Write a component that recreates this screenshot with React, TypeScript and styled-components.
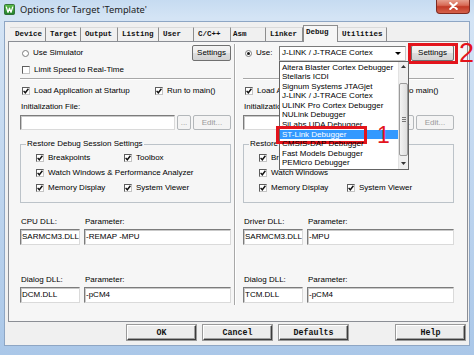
import React from "react";
import styled, { createGlobalStyle, css } from "styled-components";

const UI = `"Liberation Sans", Arial, sans-serif`;
const MONO = `"Liberation Mono", "Courier New", monospace`;

const GlobalStyle = createGlobalStyle`
  html, body { margin: 0; padding: 0; }
  body { width: 474px; height: 355px; overflow: hidden; background: #b4cde9; }
  *, *::before, *::after { box-sizing: border-box; }
`;

const Window = styled.div`
  width: 474px;
  height: 355px;
  display: flex;
  flex-direction: column;
  padding: 0 4px 9px 4px;
  background: linear-gradient(180deg, #c6dbf1 0px, #d4e4f5 18px, #c0d6ef 50%, #aac7e8 100%);
  font-family: ${UI};
  font-size: 8px;
  color: #000;
`;

const TitleBar = styled.div`
  flex: none;
  height: 21px;
  display: flex;
  align-items: flex-start;
`;

const AppIcon = styled.svg`
  flex: none;
  margin-top: 4px;
  width: 11px;
  height: 11px;
`;

const Title = styled.div`
  margin: 3px 0 0 5px;
  font-family: "Noto Sans", "Liberation Sans", sans-serif;
  font-size: 9.3px;
  line-height: 13px;
  color: #1b1b1b;
  white-space: nowrap;
`;

const CloseButton = styled.div`
  margin-left: auto;
  margin-top: -1px;
  width: 34px;
  height: 15px;
  border: 1px solid #7e2a20;
  border-top: none;
  border-radius: 0 0 4px 4px;
  background: linear-gradient(180deg, #e9a897 0%, #d86a55 45%, #c23a26 55%, #d5624c 100%);
  display: flex;
  align-items: center;
  justify-content: center;
`;

const Client = styled.div`
  flex: 1;
  display: flex;
  flex-direction: column;
  background: #f0f0f0;
  border: 1px solid #8ea6c4;
  padding: 0 1px 0 3px;
`;

const TabStrip = styled.div`
  flex: none;
  margin-top: 3px;
  height: 16px;
  display: flex;
  align-items: flex-end;
  padding-left: 2px;
`;

const Tab = styled.div<{ $w: number; $pad: number; $active?: boolean }>`
  flex: none;
  width: ${(p) => p.$w}px;
  padding-left: ${(p) => p.$pad}px;
  font-family: ${MONO};
  font-weight: bold;
  font-size: 7.5px;
  white-space: nowrap;
  color: #111;
  ${(p) =>
    p.$active
      ? css`
          height: 17px;
          margin-bottom: -1px;
          position: relative;
          z-index: 1;
          background: #f6f6f6;
          border: 1px solid #8d8d8d;
          border-bottom: none;
          line-height: 13px;
        `
      : css`
          height: 14px;
          border-top: 1px solid #dadada;
          border-right: 1px solid #8d8d8d;
          line-height: 12px;
        `}
`;

const Panel = styled.div`
  flex: none;
  height: 281px;
  border: 1px solid #8b8e95;
  background: #f6f6f6;
  display: grid;
  grid-template-columns: 225px 2px 1fr;
`;

const Half = styled.div<{ $pl: number; $pr: number }>`
  display: flex;
  flex-direction: column;
  padding: 3px ${(p) => p.$pr}px 0 ${(p) => p.$pl}px;
  min-width: 0;
`;

const VSep = styled.div`
  margin: 2px 0 16px;
  border-left: 1px solid #a8a8a8;
  border-right: 1px solid #ffffff;
`;

const TopRow = styled.div`
  height: 16px;
  display: flex;
  align-items: center;
`;

const RadioDot = styled.span<{ $on?: boolean }>`
  flex: none;
  width: 7px;
  height: 7px;
  margin-left: 2px;
  border-radius: 50%;
  border: 1px solid #7d7d7d;
  background: #fff;
  display: flex;
  align-items: center;
  justify-content: center;
  &::after {
    content: "";
    width: 3px;
    height: 3px;
    border-radius: 50%;
    background: ${(p) => (p.$on ? "#1a1a1a" : "transparent")};
  }
`;

const RadioText = styled.span<{ $w?: number }>`
  margin-left: 4px;
  line-height: 10px;
  white-space: nowrap;
  ${(p) => p.$w !== undefined && css`width: ${p.$w}px; flex: none;`}
`;

const PushButton = styled.div<{ $w: number; $disabled?: boolean }>`
  flex: none;
  width: ${(p) => p.$w}px;
  height: 100%;
  border-radius: 2px;
  border: 1px solid ${(p) => (p.$disabled ? "#b3b7ba" : "#707070")};
  background: ${(p) =>
    p.$disabled
      ? "#f4f4f4"
      : "linear-gradient(180deg, #f4f4f4 0%, #ececec 48%, #dddddd 52%, #d2d2d2 100%)"};
  color: ${(p) => (p.$disabled ? "#9a9a9a" : "#000")};
  display: flex;
  align-items: center;
  justify-content: center;
  line-height: 10px;
  white-space: nowrap;
`;

const SettingsWrap = styled.div<{ $w: number }>`
  position: relative;
  margin-left: auto;
  width: ${(p) => p.$w}px;
  height: 16px;
  display: flex;
`;

const RedBox = styled.div`
  position: absolute;
  border: 3px solid #e3141c;
  pointer-events: none;
`;

const SettingsMark = styled(RedBox)`
  top: -2px;
  left: -3px;
  right: -4px;
  bottom: -3px;
`;

const RedNumber = styled.div<{ $size: number }>`
  position: absolute;
  font-family: ${UI};
  font-size: ${(p) => p.$size}px;
  line-height: 20px;
  color: #e3141c;
`;

const NumberTwo = styled(RedNumber)`
  left: calc(100% + 5px);
  top: -2px;
`;

const Combo = styled.div`
  position: relative;
  flex: none;
  width: 127px;
  height: 15px;
  background: #fff;
  border: 1px solid;
  border-color: #7a7a7a #c9c9c9 #c9c9c9 #7a7a7a;
  display: flex;
  align-items: center;
  padding-left: 2px;
  line-height: 10px;
  white-space: nowrap;
`;

const ComboArrow = styled.span`
  margin-left: auto;
  margin-right: 4px;
  width: 0;
  height: 0;
  border-left: 3px solid transparent;
  border-right: 3px solid transparent;
  border-top: 3px solid #000;
`;

const DropList = styled.div`
  position: absolute;
  z-index: 5;
  left: -1px;
  top: calc(100% + 1px);
  width: 130px;
  height: 109px;
  background: #fff;
  border: 1px solid #646464;
  display: grid;
  grid-template-columns: 1fr 10px;
`;

const Items = styled.div`
  display: flex;
  flex-direction: column;
  padding-top: 1px;
`;

const Item = styled.div<{ $sel?: boolean }>`
  position: relative;
  height: 9.6px;
  line-height: 9.6px;
  padding-left: 2px;
  white-space: nowrap;
  color: ${(p) => (p.$sel ? "#fff" : "#000")};
  background: ${(p) => (p.$sel ? "#3399ff" : "transparent")};
`;

const ItemMark = styled(RedBox)`
  left: -4px;
  top: -4px;
  width: 91px;
  height: 18px;
`;

const NumberOne = styled(RedNumber)`
  left: 97px;
  top: -5px;
`;

const ScrollBar = styled.div`
  display: flex;
  flex-direction: column;
  background: #efefef;
  border-left: 1px solid #e2e2e2;
`;

const ScrollArrow = styled.div`
  flex: none;
  height: 10px;
  display: flex;
  align-items: center;
  justify-content: center;
`;

const ScrollTrack = styled.div`
  flex: 1;
  display: flex;
  flex-direction: column;
  align-items: center;
`;

const Thumb = styled.div`
  margin-top: 11px;
  width: 9px;
  height: 73px;
  border: 1px solid #9b9b9b;
  border-radius: 2px;
  background: linear-gradient(90deg, #f3f3f3, #dedede);
  display: flex;
  flex-direction: column;
  align-items: center;
  justify-content: center;
  gap: 1px;
`;

const Grip = styled.span`
  width: 4px;
  height: 1px;
  background: #777;
`;

const TextRow = styled.div<{ $mt: number }>`
  margin-top: ${(p) => p.$mt}px;
  height: 10px;
  line-height: 10px;
  padding-left: 1px;
  white-space: nowrap;
`;

const HLine = styled.div`
  margin-top: 3px;
  height: 2px;
  border-top: 1px solid #a8a8a8;
  border-bottom: 1px solid #ffffff;
`;

const CheckRow = styled.div<{ $mt: number; $col: number }>`
  margin-top: ${(p) => p.$mt}px;
  height: 10px;
  display: grid;
  grid-template-columns: ${(p) => p.$col}px 1fr;
`;

const CheckItem = styled.div<{ $span?: boolean }>`
  display: flex;
  align-items: center;
  gap: 4px;
  padding-left: 2px;
  height: 10px;
  line-height: 10px;
  white-space: nowrap;
  ${(p) => p.$span && css`grid-column: 1 / -1;`}
`;

const Box = styled.span`
  flex: none;
  width: 8px;
  height: 8px;
  background: #fff;
  border: 1px solid;
  border-color: #5e5e5e #c4c4c4 #c4c4c4 #5e5e5e;
  display: flex;
  align-items: center;
  justify-content: center;
`;

const FileRow = styled.div`
  margin-top: 3px;
  height: 15px;
  display: flex;
  gap: 2px;
`;

const Field = styled.div<{ $grow?: boolean }>`
  ${(p) => p.$grow && css`flex: 1;`}
  min-width: 0;
  height: 100%;
  background: #fff;
  border: 1px solid;
  border-color: #7c7c7c #dadada #dadada #7c7c7c;
  box-shadow: inset 1px 1px 0 #c9c9c9;
  padding-left: 1px;
  display: flex;
  align-items: center;
  line-height: 10px;
  white-space: nowrap;
  overflow: hidden;
`;

const Group = styled.fieldset`
  margin: 9px 0 0;
  padding: 4px 0 9px 0;
  min-width: 0;
  border: 1px solid #bcc3c9;
`;

const Legend = styled.legend`
  margin-left: 5px;
  padding: 0 1px;
  line-height: 10px;
  font-size: 8px;
`;

const GroupGrid = styled.div`
  padding-left: 13px;
  display: grid;
  grid-template-columns: 88px 1fr;
  grid-auto-rows: 10px;
  row-gap: 5px;
`;

const DllGrid = styled.div<{ $mt: number; $h: number }>`
  margin-top: ${(p) => p.$mt}px;
  height: ${(p) => p.$h}px;
  display: grid;
  grid-template-columns: 60px 1fr;
  column-gap: 4px;
  line-height: 10px;
  white-space: nowrap;
`;

const DllLabel = styled.span`
  padding-left: 1px;
`;

const ButtonRow = styled.div`
  flex: none;
  display: flex;
  padding: 3px 0 0 119px;
  gap: 7px;
`;

const DialogButton = styled.div<{ $push?: number }>`
  flex: none;
  width: 69px;
  height: 15px;
  ${(p) => p.$push !== undefined && css`margin-left: ${p.$push}px;`}
  background: #ececec;
  border: 1px solid;
  border-color: #ffffff #3c3c3c #3c3c3c #ffffff;
  box-shadow: inset -1px -1px 0 #a0a0a0, 0 0 0 1px #9a9a9a;
  font-family: ${MONO};
  font-weight: bold;
  font-size: 8.3px;
  display: flex;
  align-items: center;
  justify-content: center;
  color: #111;
`;

const CheckMark = () => (
  <svg width="6" height="6" viewBox="0 0 6 6">
    <path d="M0.6 2.9 L2.3 4.8 L5.4 0.8" fill="none" stroke="#111" strokeWidth="1.4" />
  </svg>
);

const CheckBox: React.FC<{ label: string; span?: boolean }> = ({ label, span }) => (
  <CheckItem $span={span}>
    <Box>
      <CheckMark />
    </Box>
    <span>{label}</span>
  </CheckItem>
);

const EmptyCheckBox: React.FC<{ label: string }> = ({ label }) => (
  <CheckItem>
    <Box />
    <span>{label}</span>
  </CheckItem>
);

const tabs = [
  { name: "Device", w: 36, pad: 5 },
  { name: "Target", w: 35, pad: 4 },
  { name: "Output", w: 37, pad: 4 },
  { name: "Listing", w: 41, pad: 4 },
  { name: "User", w: 35, pad: 4 },
  { name: "C/C++", w: 37, pad: 4 },
  { name: "Asm", w: 35, pad: 2 },
  { name: "Linker", w: 37, pad: 4 },
  { name: "Debug", w: 35, pad: 2, active: true },
  { name: "Utilities", w: 49, pad: 4 },
];

const debuggers = [
  "Altera Blaster Cortex Debugger",
  "Stellaris ICDI",
  "Signum Systems JTAGjet",
  "J-LINK / J-TRACE Cortex",
  "ULINK Pro Cortex Debugger",
  "NULink Debugger",
  "SiLabs UDA Debugger",
  "ST-Link Debugger",
  "CMSIS-DAP Debugger",
  "Fast Models Debugger",
  "PEMicro Debugger",
];

type BodyProps = {
  watch: string;
  dllLabel: string;
  dll: string;
  dllParam: string;
  dialog: string;
  dialogParam: string;
};

const HalfBody: React.FC<BodyProps> = ({ watch, dllLabel, dll, dllParam, dialog, dialogParam }) => (
  <>
    <HLine />
    <CheckRow $mt={6} $col={133}>
      <CheckBox label="Load Application at Startup" />
      <CheckBox label="Run to main()" />
    </CheckRow>
    <TextRow $mt={6}>Initialization File:</TextRow>
    <FileRow>
      <Field $grow />
      <PushButton $w={14} $disabled>...</PushButton>
      <PushButton $w={38} $disabled>Edit...</PushButton>
    </FileRow>
    <Group>
      <Legend>Restore Debug Session Settings</Legend>
      <GroupGrid>
        <CheckBox label="Breakpoints" />
        <CheckBox label="Toolbox" />
        <CheckBox label={watch} span />
        <CheckBox label="Memory Display" />
        <CheckBox label="System Viewer" />
      </GroupGrid>
    </Group>
    <DllGrid $mt={14} $h={10}>
      <DllLabel>{dllLabel}</DllLabel>
      <DllLabel>Parameter:</DllLabel>
    </DllGrid>
    <DllGrid $mt={2} $h={16}>
      <Field>{dll}</Field>
      <Field>{dllParam}</Field>
    </DllGrid>
    <DllGrid $mt={30} $h={10}>
      <DllLabel>Dialog DLL:</DllLabel>
      <DllLabel>Parameter:</DllLabel>
    </DllGrid>
    <DllGrid $mt={2} $h={16}>
      <Field>{dialog}</Field>
      <Field>{dialogParam}</Field>
    </DllGrid>
  </>
);

export default function App() {
  return (
    <>
      <GlobalStyle />
      <Window>
        <TitleBar>
          <AppIcon viewBox="0 0 11 11">
            <defs>
              <linearGradient id="kg" x1="0" y1="0" x2="0" y2="1">
                <stop offset="0" stopColor="#5fbf4a" />
                <stop offset="1" stopColor="#21802c" />
              </linearGradient>
            </defs>
            <rect x="0.5" y="0.5" width="10" height="10" rx="1" fill="url(#kg)" stroke="#1d5e22" strokeWidth="0.8" />
            <path d="M2.2 2.6 L4 8.4 L5.5 4.2 L7 8.4 L8.8 2.6" fill="none" stroke="#fff" strokeWidth="1.3" strokeLinejoin="round" />
          </AppIcon>
          <Title>Options for Target 'Template'</Title>
          <CloseButton>
            <svg width="9" height="8" viewBox="0 0 9 8">
              <path d="M1.2 1 L7.8 7 M7.8 1 L1.2 7" stroke="#fff" strokeWidth="2" strokeLinecap="round" />
            </svg>
          </CloseButton>
        </TitleBar>
        <Client>
          <TabStrip>
            {tabs.map((t) => (
              <Tab key={t.name} $w={t.w} $pad={t.pad} $active={t.active}>
                {t.name}
              </Tab>
            ))}
          </TabStrip>
          <Panel>
            <Half $pl={11} $pr={3}>
              <TopRow>
                <RadioDot />
                <RadioText>Use Simulator</RadioText>
                <SettingsWrap $w={39}>
                  <PushButton $w={39}>Settings</PushButton>
                </SettingsWrap>
              </TopRow>
              <CheckRow $mt={4} $col={133}>
                <EmptyCheckBox label="Limit Speed to Real-Time" />
              </CheckRow>
              <HalfBody
                watch="Watch Windows & Performance Analyzer"
                dllLabel="CPU DLL:"
                dll="SARMCM3.DLL"
                dllParam="-REMAP -MPU"
                dialog="DCM.DLL"
                dialogParam="-pCM4"
              />
            </Half>
            <VSep />
            <Half $pl={7} $pr={13}>
              <TopRow>
                <RadioDot $on />
                <RadioText $w={23}>Use:</RadioText>
                <Combo>
                  J-LINK / J-TRACE Cortex
                  <ComboArrow />
                  <DropList>
                    <Items>
                      {debuggers.map((d) => (
                        <Item key={d} $sel={d === "ST-Link Debugger"}>
                          {d}
                          {d === "ST-Link Debugger" && (
                            <>
                              <ItemMark />
                              <NumberOne $size={23}>1</NumberOne>
                            </>
                          )}
                        </Item>
                      ))}
                    </Items>
                    <ScrollBar>
                      <ScrollArrow>
                        <svg width="5" height="3" viewBox="0 0 5 3">
                          <path d="M0 3 L2.5 0 L5 3 Z" fill="#333" />
                        </svg>
                      </ScrollArrow>
                      <ScrollTrack>
                        <Thumb>
                          <Grip />
                          <Grip />
                          <Grip />
                        </Thumb>
                      </ScrollTrack>
                      <ScrollArrow>
                        <svg width="5" height="3" viewBox="0 0 5 3">
                          <path d="M0 0 L2.5 3 L5 0 Z" fill="#333" />
                        </svg>
                      </ScrollArrow>
                    </ScrollBar>
                  </DropList>
                </Combo>
                <SettingsWrap $w={43}>
                  <PushButton $w={43}>Settings</PushButton>
                  <SettingsMark />
                  <NumberTwo $size={27}>2</NumberTwo>
                </SettingsWrap>
              </TopRow>
              <CheckRow $mt={4} $col={133} />
              <HalfBody
                watch="Watch Windows"
                dllLabel="Driver DLL:"
                dll="SARMCM3.DLL"
                dllParam="-MPU"
                dialog="TCM.DLL"
                dialogParam="-pCM4"
              />
            </Half>
          </Panel>
          <ButtonRow>
            <DialogButton>OK</DialogButton>
            <DialogButton>Cancel</DialogButton>
            <DialogButton>Defaults</DialogButton>
            <DialogButton $push={41}>Help</DialogButton>
          </ButtonRow>
        </Client>
      </Window>
    </>
  );
}
